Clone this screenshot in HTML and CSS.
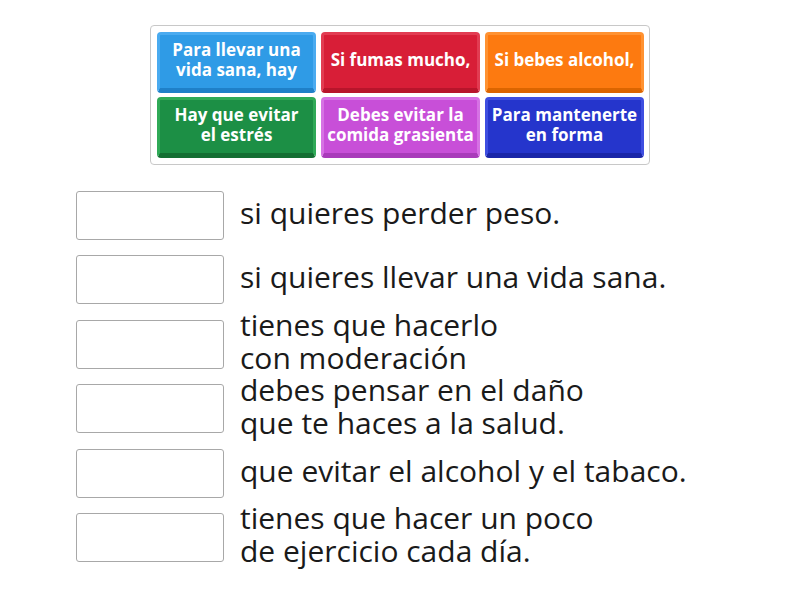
FILE: index.html
```html
<!DOCTYPE html>
<html lang="es">
<head>
<meta charset="utf-8">
<link rel="stylesheet" href="styles.css">
</head>
<body>
<div class="page">
  <div class="bank">
    <div class="tile blue">Para llevar una vida sana, hay</div>
    <div class="tile red">Si fumas mucho,</div>
    <div class="tile orange">Si bebes alcohol,</div>
    <div class="tile green">Hay que evitar el estrés</div>
    <div class="tile purple">Debes evitar la comida grasienta</div>
    <div class="tile navy">Para mantenerte en forma</div>
  </div>
  <div class="rows">
    <div class="row"><div class="slot"></div><div class="text">si quieres perder peso.</div></div>
    <div class="row"><div class="slot"></div><div class="text">si quieres llevar una vida sana.</div></div>
    <div class="row"><div class="slot"></div><div class="text">tienes que hacerlo<br>con moderación</div></div>
    <div class="row"><div class="slot"></div><div class="text">debes pensar en el daño<br>que te haces a la salud.</div></div>
    <div class="row"><div class="slot"></div><div class="text">que evitar el alcohol y el tabaco.</div></div>
    <div class="row"><div class="slot"></div><div class="text">tienes que hacer un poco<br>de ejercicio cada día.</div></div>
  </div>
</div>
</body>
</html>
```
FILE: styles.css
```css
html, body {
  margin: 0;
  padding: 0;
  background: #fff;
  font-family: "Open Sans", "DejaVu Sans", sans-serif;
}
.page {
  width: 800px;
  height: 600px;
  padding-top: 25px;
  box-sizing: border-box;
}
.bank {
  width: 500px;
  margin: 0 0 0 150px;
  box-sizing: border-box;
  border: 1px solid #c8c8c8;
  border-radius: 4px;
  padding: 6px;
  display: grid;
  grid-template-columns: 159px 159px 159px;
  column-gap: 5px;
  row-gap: 4px;
}
.tile {
  height: 61px;
  box-sizing: border-box;
  border-radius: 4px;
  border: 3px solid;
  border-bottom-width: 5px;
  color: #fff;
  font-weight: 700;
  font-size: 17px;
  line-height: 20px;
  text-align: center;
  display: flex;
  align-items: center;
  justify-content: center;
  padding: 0 8px 3px;
}
.blue { background: #2f9be6; border-color: #4aabf0; border-bottom-color: #1f80c8; }
.red { background: #d81e37; border-color: #e23c52; border-bottom-color: #b8152b; padding: 0 1px 3px; }
.orange { background: #fd7a10; border-color: #ff9232; border-bottom-color: #dc6500; padding: 0 1px 3px; }
.green { background: #1c8f45; border-color: #2faa57; border-bottom-color: #146f33; padding: 0 12px 3px; }
.purple { background: #c84fd8; border-color: #d672e4; border-bottom-color: #a93bba; padding: 0 1px 3px; }
.navy { background: #2535cc; border-color: #3e4ee0; border-bottom-color: #1a26a8; padding: 0 1px 3px; }
.rows {
  margin: 26px 0 0 76px;
  display: flex;
  flex-direction: column;
  gap: 15.4px;
}
.row {
  display: flex;
  align-items: center;
  gap: 16px;
  height: 49px;
}
.slot {
  width: 148px;
  height: 49px;
  box-sizing: border-box;
  border: 1px solid #a8a8a8;
  border-radius: 3px;
  flex: none;
}
.text {
  font-size: 30px;
  line-height: 33px;
  color: #1a1a1a;
  margin-bottom: 6px;
}
```
